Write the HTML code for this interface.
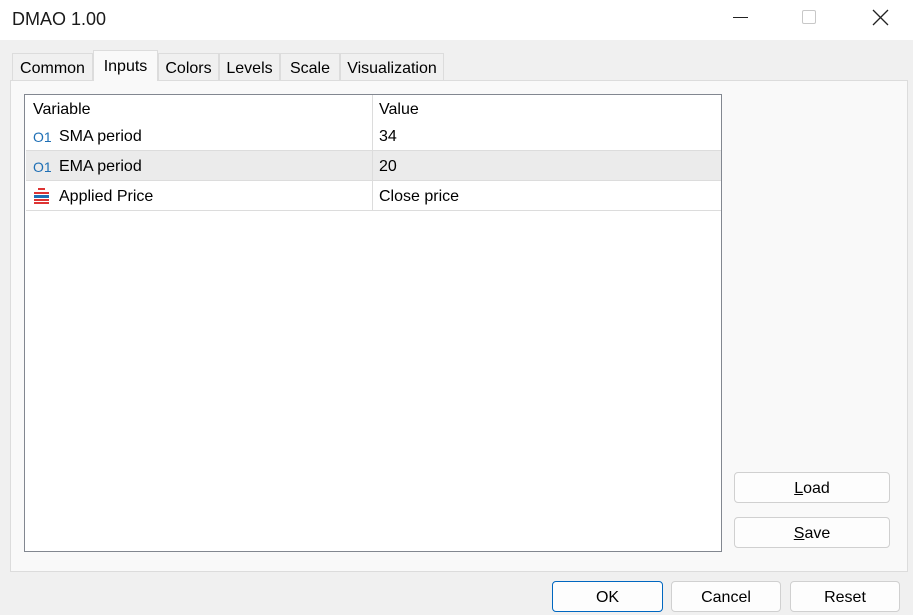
<!DOCTYPE html>
<html><head><style>
*{box-sizing:border-box;margin:0;padding:0}
body{width:913px;height:615px;background:#f0f0f0;font-family:"Liberation Sans",sans-serif;font-size:16px;color:#000;position:relative;overflow:hidden}
.abs{position:absolute}
.title{left:0;top:0;width:913px;height:40px;background:#fff}
.tab{position:absolute;top:53px;height:28px;border:1px solid #dcdcdc;border-bottom:none;background:#f0f0f0;text-align:center;line-height:29px}
.tab.sel{top:50px;height:31px;background:#f9f9f9;z-index:2;line-height:31px}
.panel{left:10px;top:80px;width:898px;height:492px;background:#f9f9f9;border:1px solid #dcdcdc}
.grid{left:24px;top:94px;width:698px;height:458px;background:#fff;border:1px solid #828790}
.row{position:absolute;left:1px;width:695px;height:30px;border-bottom:1px solid #dcdcdc;line-height:32px}
.c1{position:absolute;left:33px}
.c2{position:absolute;left:353px}
.vd{position:absolute;left:347px;top:0;width:1px;height:116px;background:#dcdcdc}
.btn{position:absolute;background:#fdfdfd;border:1px solid #d0d0d0;border-radius:4px;text-align:center;line-height:31px}
.ic{position:absolute;left:7px;color:#1e6fb5;font-size:14px}
</style></head><body>
<div class="abs title"><div class="abs" style="left:12px;top:9px;font-size:18px;color:#1a1a1a">DMAO 1.00</div>
<div class="abs" style="left:733px;top:17px;width:15px;height:1px;background:#222"></div>
<div class="abs" style="left:802px;top:10px;width:14px;height:14px;border:1px solid #c8c8c8;border-radius:2px"></div>
<svg class="abs" style="left:872px;top:9px" width="17" height="17"><path d="M1 1L16 16M16 1L1 16" stroke="#222" stroke-width="1.3"/></svg>
</div>
<div class="tab" style="left:12px;width:81px">Common</div>
<div class="tab sel" style="left:93px;width:65px">Inputs</div>
<div class="tab" style="left:158px;width:61px">Colors</div>
<div class="tab" style="left:219px;width:61px">Levels</div>
<div class="tab" style="left:280px;width:60px">Scale</div>
<div class="tab" style="left:340px;width:104px">Visualization</div>
<div class="abs panel"></div>
<div class="abs grid">
<div class="row" style="top:0;height:27px;line-height:29px;border-bottom:none"><span style="position:absolute;left:7px">Variable</span><span class="c2">Value</span></div>
<div class="row" style="top:26px"><span class="ic">O1</span><span class="c1">SMA period</span><span class="c2">34</span></div>
<div class="row" style="top:56px;background:#ebebeb"><span class="ic">O1</span><span class="c1">EMA period</span><span class="c2">20</span></div>
<div class="row" style="top:86px"><svg style="position:absolute;left:8px;top:7px" width="15" height="16"><rect x="4" y="0" width="7" height="2" fill="#d33"/><rect x="0" y="4" width="15" height="2" fill="#d33"/><rect x="0" y="7" width="15" height="3" fill="#1e6fb5"/><rect x="0" y="11" width="15" height="2" fill="#d33"/><rect x="0" y="14" width="15" height="2" fill="#d33"/></svg><span class="c1">Applied Price</span><span class="c2">Close price</span></div>
<div class="vd"></div>
</div>
<div class="btn" style="left:734px;top:472px;width:156px;height:31px"><u>L</u>oad</div>
<div class="btn" style="left:734px;top:517px;width:156px;height:31px"><u>S</u>ave</div>
<div class="btn" style="left:552px;top:581px;width:111px;height:31px;border-color:#0067c0">OK</div>
<div class="btn" style="left:671px;top:581px;width:110px;height:31px">Cancel</div>
<div class="btn" style="left:790px;top:581px;width:110px;height:31px">Reset</div>
</body></html>
